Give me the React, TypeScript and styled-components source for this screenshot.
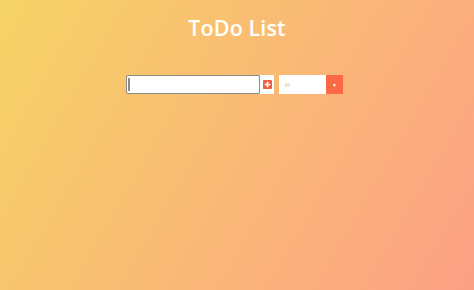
import React from "react";
import styled, { createGlobalStyle } from "styled-components";

const Global = createGlobalStyle`
  html, body { margin: 0; padding: 0; }
  body {
    min-height: 100vh;
    background-image: linear-gradient(120deg, #f6d365 0%, #fda085 100%);
    font-family: "Open Sans", "Noto Sans", sans-serif;
    color: #ffffff;
  }
`;

const Page = styled.div`
  min-height: 290px;
  display: flex;
  flex-direction: column;
`;

const Header = styled.header`
  height: 54px;
  display: flex;
  justify-content: center;
  align-items: center;
`;

const Title = styled.h1`
  margin: 0;
  font-size: 21.5px;
  font-weight: 600;
  letter-spacing: 0.1px;
  color: #ffffff;
`;

const Form = styled.form`
  padding-top: 21px;
  display: flex;
  justify-content: center;
  align-items: flex-start;
  padding-right: 5px;
`;

const InputWrap = styled.div`
  position: relative;
  display: flex;
`;

const TextInput = styled.input`
  box-sizing: border-box;
  width: 134px;
  height: 19px;
  border: 1px solid #8c8a86;
  border-radius: 2px;
  background: #ffffff;
  padding: 0 3px;
  font-size: 10px;
  outline: none;
`;

const Caret = styled.span`
  position: absolute;
  left: 2px;
  top: 3px;
  width: 2px;
  height: 13px;
  background: #8c8c8c;
`;

const AddButton = styled.button`
  box-sizing: border-box;
  width: 14px;
  height: 19px;
  border: none;
  padding: 0;
  background: #f7fffe;
  display: flex;
  align-items: center;
  justify-content: center;
`;

const SelectBox = styled.div`
  margin-left: 5px;
  display: flex;
  width: 64px;
  height: 19px;
`;

const SelectField = styled.div`
  flex: 1;
  background: #ffffff;
  display: flex;
  align-items: center;
  padding-left: 6px;
  font-size: 4.5px;
  color: #f4a78f;
`;

const Arrow = styled.div`
  width: 17px;
  background: #fb6a45;
  display: flex;
  align-items: center;
  justify-content: center;
  color: #ffffff;
  font-size: 5px;
  padding-top: 1px;
  box-sizing: border-box;
`;

export default function App() {
  return (
    <>
      <Global />
      <Page>
        <Header>
          <Title>ToDo List</Title>
        </Header>
        <Form onSubmit={(e) => e.preventDefault()}>
          <InputWrap>
            <TextInput type="text" />
            <Caret />
          </InputWrap>
          <AddButton type="submit">
            <svg width="9" height="9" viewBox="0 0 9 9">
              <rect x="0" y="0" width="9" height="9" rx="1" fill="#ef5f44" />
              <rect x="3.7" y="1.8" width="1.6" height="5.4" fill="#ffffff" />
              <rect x="1.8" y="3.7" width="5.4" height="1.6" fill="#ffffff" />
            </svg>
          </AddButton>
          <SelectBox>
            <SelectField>All</SelectField>
            <Arrow>▼</Arrow>
          </SelectBox>
        </Form>
      </Page>
    </>
  );
}
